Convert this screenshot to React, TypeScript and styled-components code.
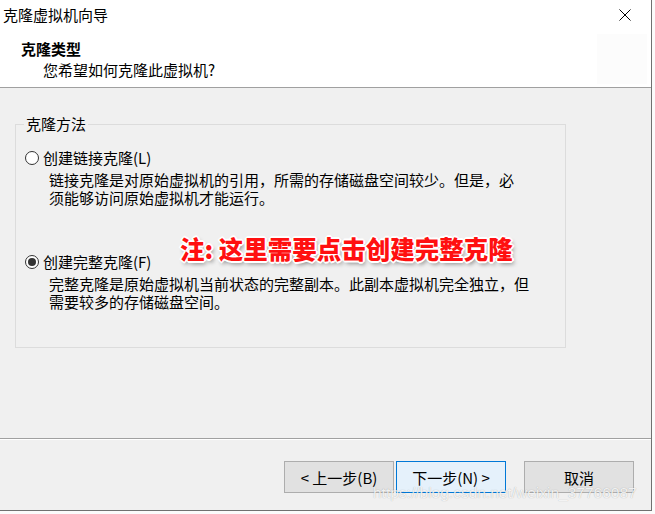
import React from "react";
import styled, { createGlobalStyle } from "styled-components";

const GlobalStyle = createGlobalStyle`
  html, body {
    margin: 0;
    padding: 0;
    background: #fbfbfb;
  }
  body {
    font-family: "Noto Sans CJK SC", "Liberation Sans", sans-serif;
    font-size: 15px;
    color: #000;
  }
`;

const Page = styled.div`
  width: 655px;
  height: 514px;
  overflow: hidden;
`;

const Window = styled.div`
  position: relative;
  width: 651px;
  height: 510px;
  display: flex;
  flex-direction: column;
  background: #f0f0f0;
  border-right: 1px solid #707070;
  border-bottom: 1px solid #707070;
`;

const TitleBar = styled.div`
  height: 30px;
  display: flex;
  align-items: center;
  justify-content: space-between;
  padding-left: 3px;
  background: #fff;
  line-height: 20px;
`;

const CloseButton = styled.div`
  width: 46px;
  height: 30px;
  display: flex;
  align-items: center;
  justify-content: center;
  margin-right: 3px;
`;

const Header = styled.div`
  height: 57px;
  display: flex;
  justify-content: space-between;
  background: #fff;
  border-bottom: 1px solid #a0a0a0;
`;

const HeaderText = styled.div`
  padding: 9px 0 0 21px;
  line-height: 20px;
`;

const HeaderTitle = styled.div`
  font-weight: 700;
`;

const HeaderSubtitle = styled.div`
  margin-top: 1px;
  padding-left: 22px;
`;

const HeaderImage = styled.div`
  width: 50px;
  height: 50px;
  margin: 4px 4px 0 0;
  background: #fcfcfc;
`;

const Body = styled.div`
  flex: 1;
  padding: 27px 0 0 15px;
  border-bottom: 1px solid #a0a0a0;
`;

const GroupBox = styled.fieldset`
  position: relative;
  box-sizing: border-box;
  width: 551px;
  height: 233px;
  margin: 0;
  padding: 15px 0 0 8px;
  border: 1px solid #dcdcdc;
`;

const Legend = styled.legend`
  padding: 0 2px;
  line-height: 18px;
`;

const Option = styled.div<{ $gap: number }>`
  margin-top: ${(p) => p.$gap}px;
`;

const RadioRow = styled.label`
  display: flex;
  align-items: center;
  gap: 4px;
  line-height: 20px;
  padding-left: 1px;
`;

const RadioCircle = styled.span<{ $checked: boolean }>`
  box-sizing: border-box;
  width: 14px;
  height: 14px;
  border-radius: 50%;
  border: 1px solid #333;
  background: #fff;
  display: flex;
  align-items: center;
  justify-content: center;

  &::after {
    content: "";
    display: ${(p) => (p.$checked ? "block" : "none")};
    width: 8px;
    height: 8px;
    border-radius: 50%;
    background: #333;
  }
`;

const Description = styled.div`
  margin-top: 3px;
  padding-left: 25px;
  line-height: 18px;
  white-space: pre;
`;

const Annotation = styled.div`
  position: absolute;
  left: 164px;
  top: 100px;
  font-size: 24.5px;
  font-weight: 900;
  line-height: 32px;
  color: #ff1010;
  white-space: nowrap;
  text-shadow: 1px 0 0 #fff, -1px 0 0 #fff, 0 1px 0 #fff, 0 -1px 0 #fff,
    2px 0 0 #fff, -2px 0 0 #fff, 0 2px 0 #fff, 0 -2px 0 #fff,
    1px 1px 0 #fff, -1px -1px 0 #fff, 1px -1px 0 #fff, -1px 1px 0 #fff,
    2px 3px 4px rgba(0, 0, 0, 0.45);
`;

const Footer = styled.div`
  flex: 0 0 71px;
  box-sizing: border-box;
  display: flex;
  align-items: flex-start;
  justify-content: flex-end;
  padding: 21px 17px 0 0;
  border-top: 1px solid #fff;
`;

const Button = styled.button<{ $primary?: boolean; $gapLeft?: number }>`
  box-sizing: border-box;
  width: 110px;
  height: 32px;
  margin-left: ${(p) => p.$gapLeft ?? 0}px;
  padding: 0;
  font-family: inherit;
  font-size: 15px;
  color: #000;
  background: ${(p) => (p.$primary ? "#e5f1fb" : "#e1e1e1")};
  border: 1px solid ${(p) => (p.$primary ? "#0078d7" : "#adadad")};
  border-radius: 0;
`;

const Watermark = styled.div`
  position: absolute;
  left: 373px;
  top: 483px;
  font-family: "Liberation Sans", Arial, sans-serif;
  font-size: 15.5px;
  line-height: 20px;
  color: rgba(255, 255, 255, 0.85);
  text-shadow: 0 0 1px rgba(0, 0, 0, 0.3);
  white-space: nowrap;
`;

function CloseIcon() {
  return (
    <svg width="12" height="12" viewBox="0 0 12 12">
      <path d="M0.5 0.5 L11.5 11.5 M11.5 0.5 L0.5 11.5" stroke="#000" strokeWidth="1" />
    </svg>
  );
}

export default function App() {
  return (
    <Page>
      <GlobalStyle />
      <Window>
        <TitleBar>
          <span>克隆虚拟机向导</span>
          <CloseButton>
            <CloseIcon />
          </CloseButton>
        </TitleBar>
        <Header>
          <HeaderText>
            <HeaderTitle>克隆类型</HeaderTitle>
            <HeaderSubtitle>您希望如何克隆此虚拟机?</HeaderSubtitle>
          </HeaderText>
          <HeaderImage />
        </Header>
        <Body>
          <GroupBox>
            <Legend>克隆方法</Legend>
            <Option $gap={0}>
              <RadioRow>
                <RadioCircle $checked={false} />
                创建链接克隆(L)
              </RadioRow>
              <Description>
                {"链接克隆是对原始虚拟机的引用，所需的存储磁盘空间较少。但是，必\n须能够访问原始虚拟机才能运行。"}
              </Description>
            </Option>
            <Option $gap={45}>
              <RadioRow>
                <RadioCircle $checked={true} />
                创建完整克隆(F)
              </RadioRow>
              <Description>
                {"完整克隆是原始虚拟机当前状态的完整副本。此副本虚拟机完全独立，但\n需要较多的存储磁盘空间。"}
              </Description>
            </Option>
            <Annotation>注: 这里需要点击创建完整克隆</Annotation>
          </GroupBox>
        </Body>
        <Footer>
          <Button>&lt; 上一步(B)</Button>
          <Button $primary $gapLeft={2}>下一步(N) &gt;</Button>
          <Button $gapLeft={18}>取消</Button>
        </Footer>
        <Watermark>https://blog.csdn.net/weixin_37766087</Watermark>
      </Window>
    </Page>
  );
}
